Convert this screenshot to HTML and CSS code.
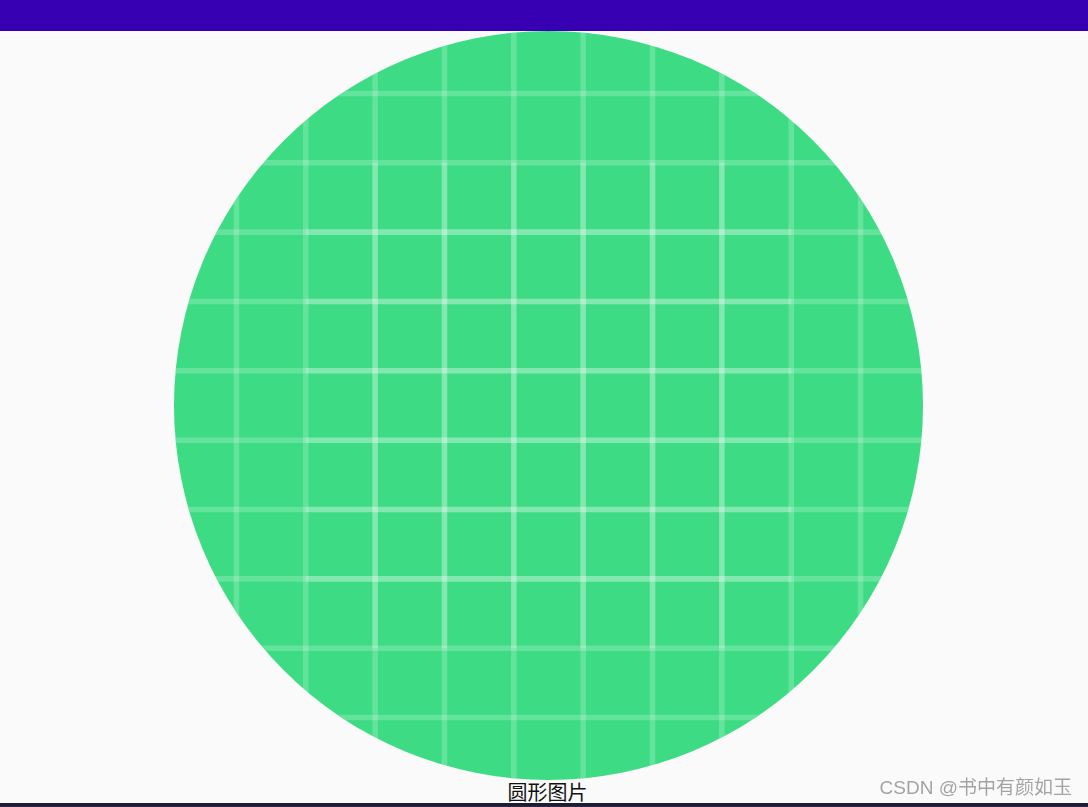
FILE: index.html
```html
<!DOCTYPE html>
<html lang="zh">

<head>
  <meta charset="UTF-8">
  <meta name="viewport" content="width=device-width, initial-scale=1.0">
  <title>圆形图片</title>
  <link rel="stylesheet" href="styles.css">
</head>

<body>
  <div class="app-bar"></div>

  <div class="content">
    <div class="round-image">
      <svg viewBox="0 0 108 108" width="749" height="749">
        <rect width="108" height="108" fill="#3DDC84" />
        <g stroke="#FFFFFF" stroke-opacity="0.2" stroke-width="0.8" fill="none">
          <path d="M9,0L9,108 M19,0L19,108 M29,0L29,108 M39,0L39,108 M49,0L49,108 M59,0L59,108 M69,0L69,108 M79,0L79,108 M89,0L89,108 M99,0L99,108" />
          <path d="M0,9L108,9 M0,19L108,19 M0,29L108,29 M0,39L108,39 M0,49L108,49 M0,59L108,59 M0,69L108,69 M0,79L108,79 M0,89L108,89 M0,99L108,99" />
          <path d="M19,29L89,29 M19,39L89,39 M19,49L89,49 M19,59L89,59 M19,69L89,69 M19,79L89,79" />
          <path d="M29,19L29,89 M39,19L39,89 M49,19L49,89 M59,19L59,89 M69,19L69,89 M79,19L79,89" />
        </g>
      </svg>
    </div>
    <div class="caption">圆形图片</div>
  </div>

  <div class="watermark">CSDN @书中有颜如玉</div>
  <div class="window-edge"></div>
</body>

</html>
```

FILE: styles.css
```css
html,
body {
  margin: 0;
  height: 100%;
  overflow: hidden;
}

body {
  background: #fafafa;
  font-family: "Noto Sans CJK SC", "Liberation Sans", sans-serif;
}

.app-bar {
  height: 31px;
  background: #3700B3;
}

.content {
  display: flex;
  flex-direction: column;
  align-items: center;
  padding-left: 9px;
}

.round-image {
  width: 749px;
  height: 749px;
  border-radius: 50%;
  overflow: hidden;
}

.round-image svg {
  display: block;
}

.caption {
  font-size: 20px;
  line-height: 24px;
  color: #111;
  margin-right: 2px;
}

.watermark {
  position: fixed;
  right: 16px;
  bottom: 8px;
  font-family: "Liberation Sans", "Noto Sans CJK SC", sans-serif;
  font-size: 19px;
  line-height: 22px;
  color: #a3a3a3;
  text-shadow: 0 0 1px #ffffff;
}

.window-edge {
  position: fixed;
  left: 0;
  right: 0;
  bottom: 0;
  height: 4px;
  background: #1c1c33;
  border-bottom: 1px solid #2a2a40;
  box-sizing: border-box;
}
```
